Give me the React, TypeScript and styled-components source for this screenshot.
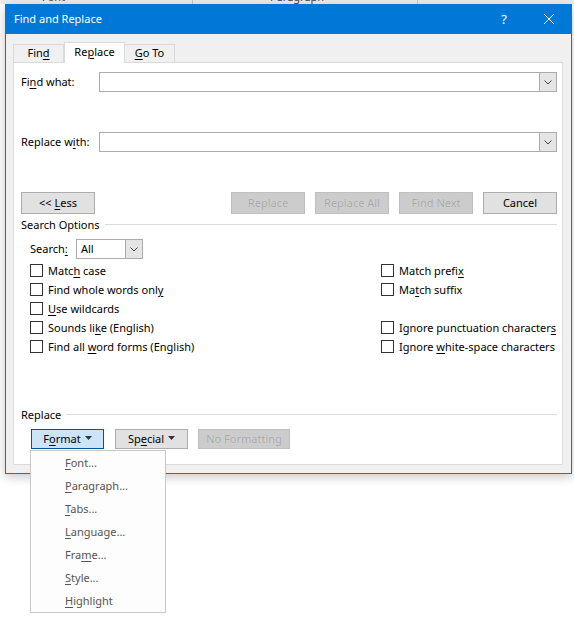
import React from "react";
import styled, { createGlobalStyle } from "styled-components";

const GlobalStyle = createGlobalStyle`
  html, body {
    margin: 0;
    padding: 0;
    background: #ffffff;
  }
  body {
    font-family: "Noto Sans", "Open Sans", sans-serif;
    font-size: 11px;
    color: #000;
  }
`;

const Page = styled.div`
  width: 574px;
  height: 621px;
  overflow: hidden;
  display: flex;
  flex-direction: column;
`;

const Ribbon = styled.div`
  height: 4px;
  flex-shrink: 0;
  background: #ececec;
  display: flex;
  overflow: hidden;
  color: #444;
`;

const RibbonGroup = styled.div<{ $width: number; $indent: number }>`
  width: ${(p) => p.$width}px;
  box-sizing: border-box;
  padding-left: ${(p) => p.$indent}px;
  border-right: 1px solid #c6c6c6;
  line-height: 1;
  margin-top: -9px;
`;

const Dialog = styled.div`
  margin-left: 5px;
  width: 567px;
  height: 470px;
  box-sizing: border-box;
  border: 1px solid #0078d7;
  border-top: none;
  background: #f0f0f0;
  display: flex;
  flex-direction: column;
  box-shadow: 0 3px 10px rgba(0, 0, 0, 0.22);
  position: relative;
`;

const TitleBar = styled.div`
  height: 30px;
  flex-shrink: 0;
  margin: 0 -1px;
  background: #0078d7;
  color: #fff;
  display: flex;
  align-items: center;
`;

const Title = styled.div`
  flex: 1;
  padding: 0 0 2px 9px;
  font-size: 11px;
`;

const CaptionButton = styled.div<{ $width: number }>`
  width: ${(p) => p.$width}px;
  height: 30px;
  display: flex;
  align-items: center;
  justify-content: center;
  font-size: 13px;
  padding-bottom: 1px;
  box-sizing: border-box;
`;

const Body = styled.div`
  flex: 1;
  display: flex;
  flex-direction: column;
  padding: 8px 8px 8px 7px;
`;

const TabStrip = styled.div`
  height: 20px;
  display: flex;
  align-items: flex-end;
  position: relative;
  z-index: 1;
`;

const Tab = styled.div<{ $active?: boolean; $width: number }>`
  width: ${(p) => p.$width}px;
  box-sizing: border-box;
  height: ${(p) => (p.$active ? 21 : 18)}px;
  margin-bottom: ${(p) => (p.$active ? -1 : 0)}px;
  align-self: ${(p) => (p.$active ? "flex-start" : "flex-end")};
  background: ${(p) => (p.$active ? "#ffffff" : "#f0f0f0")};
  border: 1px solid #d9d9d9;
  border-bottom: none;
  margin-left: ${(p) => (p.$active ? 0 : -1)}px;
  display: flex;
  align-items: center;
  justify-content: center;
  padding-bottom: ${(p) => (p.$active ? 3 : 2)}px;
  &:first-child {
    margin-left: 0;
  }
`;

const Panel = styled.div`
  flex: 1;
  background: #fff;
  border: 1px solid #d9d9d9;
  padding: 9px 5px 0 7px;
  display: flex;
  flex-direction: column;
`;

const Key = styled.span`
  text-decoration: underline;
  text-underline-offset: 2px;
`;

const FieldRow = styled.div<{ $gap?: number }>`
  display: flex;
  align-items: center;
  height: 20px;
  margin-top: ${(p) => p.$gap ?? 0}px;
`;

const FieldLabel = styled.div`
  width: 78px;
  padding-bottom: 2px;
`;

const Combo = styled.div<{ $width?: number }>`
  ${(p) => (p.$width ? `width: ${p.$width}px;` : "flex: 1;")}
  height: 20px;
  box-sizing: border-box;
  border: 1px solid #ababab;
  display: flex;
  background: #fff;
`;

const ComboText = styled.div`
  flex: 1;
  padding: 0 0 2px 4px;
  display: flex;
  align-items: center;
`;

const ComboArrow = styled.div`
  width: 17px;
  box-sizing: border-box;
  border-left: 1px solid #ababab;
  background: #e5e5e5;
  display: flex;
  align-items: center;
  justify-content: center;
`;

const ButtonRow = styled.div`
  display: flex;
  margin-top: 40px;
  gap: 10px;
`;

const Spacer = styled.div`
  flex: 1;
`;

const Button = styled.div<{
  $width: number;
  $height?: number;
  $variant?: "normal" | "disabled" | "pressed";
}>`
  width: ${(p) => p.$width}px;
  height: ${(p) => p.$height ?? 22}px;
  box-sizing: border-box;
  display: flex;
  align-items: center;
  justify-content: center;
  gap: 4px;
  padding-bottom: 2px;
  border: 1px solid
    ${(p) =>
      p.$variant === "disabled"
        ? "#bfbfbf"
        : p.$variant === "pressed"
          ? "#005499"
          : "#adadad"};
  background: ${(p) =>
    p.$variant === "disabled"
      ? "#cccccc"
      : p.$variant === "pressed"
        ? "#cce4f7"
        : "#e1e1e1"};
  color: ${(p) => (p.$variant === "disabled" ? "#a6a6a6" : "#000")};
  text-shadow: ${(p) =>
    p.$variant === "disabled" ? "0 0 1px rgba(255,255,255,0.6)" : "none"};
`;

const GroupHeader = styled.div<{ $gap: number }>`
  display: flex;
  align-items: center;
  gap: 5px;
  height: 16px;
  box-sizing: border-box;
  padding-bottom: 2px;
  margin-top: ${(p) => p.$gap}px;
  &::after {
    content: "";
    flex: 1;
    height: 1px;
    background: #dcdcdc;
  }
`;

const SearchRow = styled.div`
  display: flex;
  align-items: center;
  margin: 6px 0 0 9px;
  height: 20px;
`;

const SearchLabel = styled.div`
  width: 46px;
  padding-bottom: 2px;
`;

const Options = styled.div`
  display: grid;
  grid-template-columns: 351px 1fr;
  grid-auto-flow: column;
  grid-template-rows: repeat(5, 19px);
  margin: 2px 0 0 9px;
`;

const Option = styled.label`
  display: flex;
  align-items: center;
  gap: 5px;
`;

const Box = styled.span`
  width: 13px;
  height: 13px;
  box-sizing: border-box;
  border: 1px solid #333;
  background: #fff;
`;

const ReplaceButtons = styled.div`
  display: flex;
  margin: 6px 0 0 10px;
`;

const MenuAnchor = styled.div<{ $gap?: number }>`
  position: relative;
  margin-left: ${(p) => p.$gap ?? 0}px;
`;

const Menu = styled.div`
  position: absolute;
  top: calc(100% + 1px);
  left: -1px;
  width: 136px;
  height: 163px;
  box-sizing: border-box;
  border: 1px solid #c8c8c8;
  background: #fdfdfd;
  padding-top: 1px;
  z-index: 5;
`;

const MenuItem = styled.div`
  height: 23px;
  line-height: 21px;
  padding-left: 34px;
  color: #555;
`;

const Caret = () => (
  <svg width="7" height="4" viewBox="0 0 7 4">
    <path d="M0 0h7L3.5 4z" fill="#333" />
  </svg>
);

const Chevron = () => (
  <svg width="8" height="5" viewBox="0 0 8 5">
    <path d="M0.5 0.5L4 4L7.5 0.5" fill="none" stroke="#444" strokeWidth="1" />
  </svg>
);

const CloseIcon = () => (
  <svg width="10" height="10" viewBox="0 0 10 10">
    <path d="M0 0L10 10M10 0L0 10" stroke="#fff" strokeWidth="1" />
  </svg>
);

type OptionDef = { before: string; key: string; after: string } | null;

const leftOptions: OptionDef[] = [
  { before: "Matc", key: "h", after: " case" },
  { before: "Find whole words onl", key: "y", after: "" },
  { before: "", key: "U", after: "se wildcards" },
  { before: "Sounds li", key: "k", after: "e (English)" },
  { before: "Find all ", key: "w", after: "ord forms (English)" },
];

const rightOptions: OptionDef[] = [
  { before: "Match prefi", key: "x", after: "" },
  { before: "Ma", key: "t", after: "ch suffix" },
  null,
  { before: "Ignore punctuation character", key: "s", after: "" },
  { before: "Ignore ", key: "w", after: "hite-space characters" },
];

const menuItems = [
  { before: "", key: "F", after: "ont..." },
  { before: "", key: "P", after: "aragraph..." },
  { before: "", key: "T", after: "abs..." },
  { before: "", key: "L", after: "anguage..." },
  { before: "Fra", key: "m", after: "e..." },
  { before: "", key: "S", after: "tyle..." },
  { before: "", key: "H", after: "ighlight" },
];

export default function App() {
  return (
    <Page>
      <GlobalStyle />
      <Ribbon>
        <RibbonGroup $width={193} $indent={42}>
          Font
        </RibbonGroup>
        <RibbonGroup $width={225} $indent={77}>
          Paragraph
        </RibbonGroup>
      </Ribbon>
      <Dialog>
        <TitleBar>
          <Title>Find and Replace</Title>
          <CaptionButton $width={44}>?</CaptionButton>
          <CaptionButton $width={46}>
            <CloseIcon />
          </CaptionButton>
        </TitleBar>
        <Body>
          <TabStrip>
            <Tab $width={51}>
              Fin<Key>d</Key>
            </Tab>
            <Tab $width={61} $active>
              Re<Key>p</Key>lace
            </Tab>
            <Tab $width={51}>
              <Key>G</Key>o To
            </Tab>
          </TabStrip>
          <Panel>
            <FieldRow>
              <FieldLabel>
                Fi<Key>n</Key>d what:
              </FieldLabel>
              <Combo>
                <ComboText />
                <ComboArrow>
                  <Chevron />
                </ComboArrow>
              </Combo>
            </FieldRow>
            <FieldRow $gap={40}>
              <FieldLabel>
                Replace w<Key>i</Key>th:
              </FieldLabel>
              <Combo>
                <ComboText />
                <ComboArrow>
                  <Chevron />
                </ComboArrow>
              </Combo>
            </FieldRow>
            <ButtonRow>
              <Button $width={74}>
                <span>
                  &lt;&lt; <Key>L</Key>ess
                </span>
              </Button>
              <Spacer />
              <Button $width={74} $variant="disabled">
                Replace
              </Button>
              <Button $width={74} $variant="disabled">
                Replace All
              </Button>
              <Button $width={74} $variant="disabled">
                Find Next
              </Button>
              <Button $width={74}>Cancel</Button>
            </ButtonRow>
            <GroupHeader $gap={3}>Search Options</GroupHeader>
            <SearchRow>
              <SearchLabel>
                Search<Key>:</Key>
              </SearchLabel>
              <Combo $width={67}>
                <ComboText>All</ComboText>
                <ComboArrow>
                  <Chevron />
                </ComboArrow>
              </Combo>
            </SearchRow>
            <Options>
              {[...leftOptions, ...rightOptions].map((o, i) =>
                o ? (
                  <Option key={i}>
                    <Box />
                    <span>
                      {o.before}
                      <Key>{o.key}</Key>
                      {o.after}
                    </span>
                  </Option>
                ) : (
                  <div key={i} />
                ),
              )}
            </Options>
            <GroupHeader $gap={51}>Replace</GroupHeader>
            <ReplaceButtons>
              <MenuAnchor>
                <Button $width={73} $height={20} $variant="pressed">
                  <span>
                    F<Key>o</Key>rmat
                  </span>
                  <Caret />
                </Button>
                <Menu>
                  {menuItems.map((m) => (
                    <MenuItem key={m.after}>
                      {m.before}
                      <Key>{m.key}</Key>
                      {m.after}
                    </MenuItem>
                  ))}
                </Menu>
              </MenuAnchor>
              <MenuAnchor $gap={11}>
                <Button $width={73} $height={20}>
                  <span>
                    Sp<Key>e</Key>cial
                  </span>
                  <Caret />
                </Button>
              </MenuAnchor>
              <MenuAnchor $gap={10}>
                <Button $width={92} $height={20} $variant="disabled">
                  No Formatting
                </Button>
              </MenuAnchor>
            </ReplaceButtons>
          </Panel>
        </Body>
      </Dialog>
    </Page>
  );
}
